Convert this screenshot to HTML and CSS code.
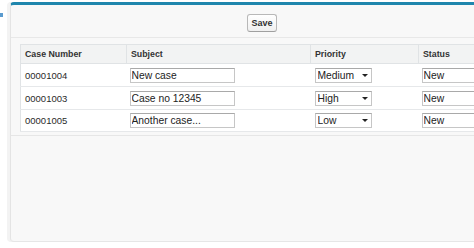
FILE: index.html
```html
<!DOCTYPE html>
<html lang="en">
<head>
    <meta charset="UTF-8">
    <title>Cases - Mass Edit</title>
    <link rel="stylesheet" href="styles.css">
</head>
<body>

    <span class="side-tab"></span>

    <div class="page-block">
        <!-- Buttons -->
        <div class="button-bar">
            <button type="button" class="btn">Save</button>
        </div>

        <!-- Editable list -->
        <div class="block-section">
            <table class="list">
                <tr class="header-row">
                    <th class="col-number">Case Number</th>
                    <th class="col-subject">Subject</th>
                    <th class="col-priority">Priority</th>
                    <th class="col-status">Status</th>
                </tr>
                <tr>
                    <td>00001004</td>
                    <td><input type="text" class="field" value="New case"></td>
                    <td>
                        <span class="picklist">
                            <select>
                                <option>High</option>
                                <option selected>Medium</option>
                                <option>Low</option>
                            </select>
                        </span>
                    </td>
                    <td><input type="text" class="field" value="New"></td>
                </tr>
                <tr>
                    <td>00001003</td>
                    <td><input type="text" class="field" value="Case no 12345"></td>
                    <td>
                        <span class="picklist">
                            <select>
                                <option selected>High</option>
                                <option>Medium</option>
                                <option>Low</option>
                            </select>
                        </span>
                    </td>
                    <td><input type="text" class="field" value="New"></td>
                </tr>
                <tr>
                    <td>00001005</td>
                    <td><input type="text" class="field" value="Another case..."></td>
                    <td>
                        <span class="picklist">
                            <select>
                                <option>High</option>
                                <option>Medium</option>
                                <option selected>Low</option>
                            </select>
                        </span>
                    </td>
                    <td><input type="text" class="field" value="New"></td>
                </tr>
            </table>
        </div>
    </div>

</body>
</html>
```

FILE: styles.css
```css
body {
    font-family: 'Liberation Sans', Arial, sans-serif;
    background-color: #ffffff;
    margin: 0;
    padding: 0;
    color: #222;
    overflow: hidden;
    width: 474px;
    height: 248px;
    position: relative;
}
.side-tab {
    position: absolute;
    left: 0;
    top: 13px;
    width: 3px;
    height: 4px;
    background-color: #5b9bcf;
}
.page-block {
    margin: 2px 0 0 10px;
    height: 236px;
    overflow: hidden;
    background-color: #f8f8f8;
    border-top: 3px solid #1f86ad;
    border-left: 1px solid #e4e4e4;
    border-bottom: 1px solid #e6e6e6;
    border-radius: 4px 0 0 4px;
    box-shadow: -3px 0 0 #f3f3f3;
}
.button-bar {
    padding: 7px 0;
    text-align: center;
    border-bottom: 1px solid #e8e8e8;
    box-sizing: border-box;
    height: 33px;
}
.btn {
    width: 30px;
    height: 18px;
    padding: 0;
    font-family: 'Liberation Sans', Arial, sans-serif;
    font-size: 9px;
    font-weight: bold;
    color: #333;
    background: linear-gradient(#ffffff, #f0f0f0);
    border: 1px solid #b8b8b8;
    border-bottom-color: #9f9f9f;
    border-radius: 3px;
    margin-left: 39px;
}
.block-section {
    padding: 6px 0 3px 9px;
    border-bottom: 1px solid #e6e6e6;
}
.list {
    border-collapse: collapse;
    width: 560px;
    background-color: #ffffff;
    border: 1px solid #e0e3e5;
    table-layout: fixed;
}
.list th {
    height: 18px;
    padding: 0 0 0 4px;
    text-align: left;
    font-size: 8.8px;
    font-weight: bold;
    color: #333;
    background-color: #f2f3f3;
    border-right: 1px solid #e0e3e5;
    border-bottom: 1px solid #e0e3e5;
}
.list .col-number { width: 101px; }
.list .col-subject { width: 179px; }
.list .col-priority { width: 103px; }
.list td {
    height: 22px;
    padding: 0 0 0 3px;
    font-size: 9.5px;
    color: #2a2a2a;
    border-bottom: 1px solid #e6e8ea;
    vertical-align: middle;
}
.list td:first-child {
    padding-left: 4px;
}
.list tr:last-child td {
    height: 21px;
}
.field {
    box-sizing: border-box;
    width: 105px;
    height: 15px;
    margin: 0;
    padding: 0 0 0 1px;
    font-family: 'Liberation Sans', Arial, sans-serif;
    font-size: 10.3px;
    color: #222;
    background-color: #fff;
    border: 1px solid #c6c6c6;
    border-top-color: #a9a9a9;
    border-radius: 0;
    display: block;
}
.picklist {
    position: relative;
    display: block;
    width: 57px;
    height: 15px;
    margin-left: 1px;
}
.picklist select {
    box-sizing: border-box;
    width: 57px;
    height: 15px;
    margin: 0;
    padding: 0 0 0 2px;
    appearance: none;
    -webkit-appearance: none;
    font-family: 'Liberation Sans', Arial, sans-serif;
    font-size: 10.3px;
    color: #222;
    background-color: #fff;
    border: 1px solid #c6c6c6;
    border-top-color: #a9a9a9;
    border-radius: 0;
}
.picklist::after {
    content: "";
    position: absolute;
    right: 4px;
    top: 6px;
    border-left: 3px solid transparent;
    border-right: 3px solid transparent;
    border-top: 3px solid #222;
}
```
